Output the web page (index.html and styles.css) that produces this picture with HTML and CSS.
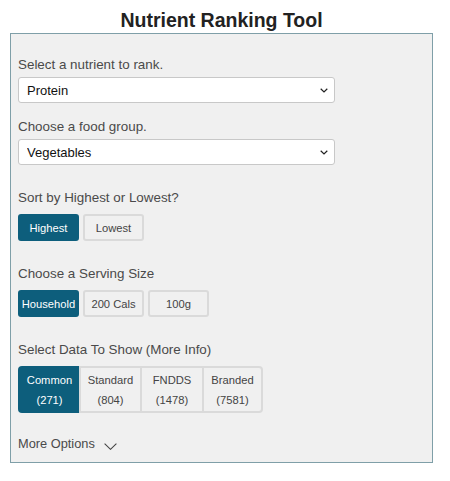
FILE: index.html
```html
<!DOCTYPE html>
<html>
<head>
<meta charset="utf-8">
<link rel="stylesheet" href="styles.css">
</head>
<body>
<div class="tool">
  <h1 class="title">Nutrient Ranking Tool</h1>
  <div class="panel">
    <div class="group">
      <label class="label">Select a nutrient to rank.</label>
      <div class="selwrap">
        <select class="select"><option>Protein</option></select>
        <svg class="selarrow" width="8" height="5" viewBox="0 0 8 5"><path d="M0.7 0.8 L4 4 L7.3 0.8" fill="none" stroke="#222" stroke-width="1.2"/></svg>
      </div>
    </div>
    <div class="group second">
      <label class="label">Choose a food group.</label>
      <div class="selwrap">
        <select class="select"><option>Vegetables</option></select>
        <svg class="selarrow" width="8" height="5" viewBox="0 0 8 5"><path d="M0.7 0.8 L4 4 L7.3 0.8" fill="none" stroke="#222" stroke-width="1.2"/></svg>
      </div>
    </div>
    <div class="group gap">
      <label class="label">Sort by Highest or Lowest?</label>
      <div class="btns">
        <button class="btn active">Highest</button>
        <button class="btn">Lowest</button>
      </div>
    </div>
    <div class="group gap">
      <label class="label">Choose a Serving Size</label>
      <div class="btns">
        <button class="btn active">Household</button>
        <button class="btn">200 Cals</button>
        <button class="btn">100g</button>
      </div>
    </div>
    <div class="group gap">
      <label class="label">Select Data To Show (More Info)</label>
      <div class="seg">
        <button class="segbtn active">Common<br>(271)</button>
        <button class="segbtn">Standard<br>(804)</button>
        <button class="segbtn wide">FNDDS<br>(1478)</button>
        <button class="segbtn">Branded<br>(7581)</button>
      </div>
    </div>
    <div class="more">
      <span>More Options</span>
      <svg class="chev" width="13" height="7" viewBox="0 0 13 7"><path d="M0.6 0.6 L6.5 6.3 L12.4 0.6" fill="none" stroke="#444" stroke-width="1.1"/></svg>
    </div>
  </div>
</div>
</body>
</html>
```

FILE: styles.css
```css
html, body {
  margin: 0;
  padding: 0;
  background: #fff;
}
body {
  font-family: "Liberation Sans", Arial, sans-serif;
  color: #444;
}
.tool {
  width: 423px;
  margin-left: 10px;
}
.title {
  margin: 0;
  height: 33px;
  font-family: "Liberation Sans", Arial, sans-serif;
  font-weight: bold;
  font-size: 19.5px;
  line-height: 40px;
  text-align: center;
  color: #222;
}
.panel {
  background: #f0f0f0;
  border: 1px solid #7f9fa8;
  padding: 21px 7px 8px;
}
.group {
  display: flex;
  flex-direction: column;
  align-items: flex-start;
}
.group.second {
  margin-top: 14px;
}
.group.gap {
  margin-top: 23px;
}
.label {
  font-size: 13.4px;
  line-height: 20px;
  color: #4a4a4a;
  margin-bottom: 2px;
}
.gap .label {
  margin-bottom: 6px;
}
.selwrap {
  position: relative;
  display: flex;
}
.select {
  appearance: none;
  -webkit-appearance: none;
  width: 317px;
  height: 26px;
  font-family: "Liberation Sans", Arial, sans-serif;
  font-size: 13px;
  color: #111;
  background: #fff;
  border: 1px solid #c8c8c8;
  border-radius: 3px;
  padding: 0 8px;
}
.selarrow {
  position: absolute;
  right: 7px;
  top: 11px;
  pointer-events: none;
}
.btns {
  display: flex;
  gap: 4px;
}
.btn {
  width: 61px;
  height: 27px;
  padding: 0;
  font-family: "Liberation Sans", Arial, sans-serif;
  font-size: 11.2px;
  color: #444;
  background: #f0f0f0;
  border: 2px solid #dadada;
  border-radius: 3px;
}
.btn.active {
  background: #0d5e7c;
  border-color: #0d5e7c;
  color: #fff;
}
.seg {
  display: flex;
}
.segbtn {
  width: 61px;
  height: 47px;
  padding: 0;
  font-family: "Liberation Sans", Arial, sans-serif;
  font-size: 11.2px;
  line-height: 20px;
  color: #444;
  background: #f0f0f0;
  border: 2px solid #dadada;
  border-right: none;
}
.segbtn.wide {
  width: 62px;
}
.segbtn:first-child {
  border-radius: 4px 0 0 4px;
}
.segbtn:last-child {
  border-right: 2px solid #dadada;
  border-radius: 0 4px 4px 0;
}
.segbtn.active {
  background: #0d5e7c;
  border-color: #0d5e7c;
  color: #fff;
}
.more {
  margin-top: 21px;
  display: flex;
  align-items: center;
  gap: 9px;
  font-size: 12.8px;
  line-height: 20px;
  color: #4a4a4a;
}
.chev {
  margin-top: 4px;
}
```
